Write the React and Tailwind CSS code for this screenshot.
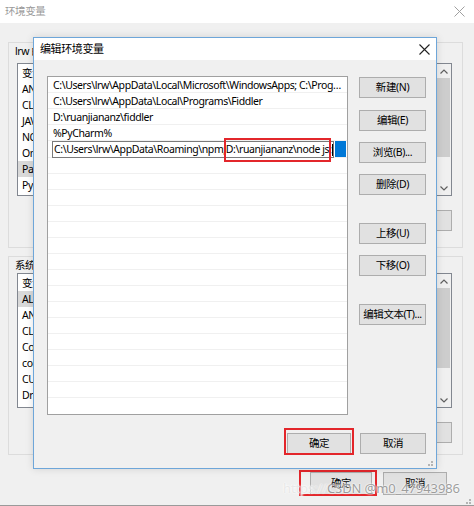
import React from 'react'

const userVars = ['变量', 'ANDROID_HOME', 'CLASSPATH', 'JAVA_HOME', 'NODE_PATH', 'OneDrive', 'Path', 'PyCharm']
const sysVars = ['变量', 'ALLUSERSPROFILE', 'ANDROID_SDK', 'CLASSPATH', 'ComSpec', 'configsetroot', 'CUDA_PATH', 'DriverData']

const paths = [
  'C:\\Users\\lrw\\AppData\\Local\\Microsoft\\WindowsApps; C:\\Program Files\\nodejs',
  'C:\\Users\\lrw\\AppData\\Local\\Programs\\Fiddler',
  'D:\\ruanjiananz\\fiddler',
  '%PyCharm%',
]

const WinButton = ({ children, className = '' }) => (
  <div className={'flex items-center justify-center h-[21px] bg-[#e1e1e1] border border-[#adadad] leading-none whitespace-nowrap ' + className}>
    {children}
  </div>
)

// red marker drawn over a button, like the hand-made highlight in the screenshot
const RedMark = ({ className }) => (
  <div className={'absolute border-2 border-[#e3262b] pointer-events-none ' + className} />
)

const ScrollBar = () => (
  <div className="w-[15px] h-full bg-[#f0f0f0] flex flex-col items-center">
    <div className="h-[14px] flex items-center justify-center">
      <svg width="8" height="5" viewBox="0 0 8 5"><path d="M0.5 4.5 L4 1 L7.5 4.5" fill="none" stroke="#606060" strokeWidth="1.2" /></svg>
    </div>
    <div className="w-[13px] h-[60%] bg-[#cdcdcd]" />
    <div className="flex-1" />
    <div className="h-[14px] flex items-center justify-center">
      <svg width="8" height="5" viewBox="0 0 8 5"><path d="M0.5 0.5 L4 4 L7.5 0.5" fill="none" stroke="#606060" strokeWidth="1.2" /></svg>
    </div>
  </div>
)

const VarList = ({ items, selected, height }) => (
  <div className={'flex w-[435px] bg-white border border-[#828790] ' + height}>
    <div className="flex-1 pt-[1px]">
      {items.map((t, i) => (
        <div key={i} className={'h-[16px] leading-[16px] pl-[4px] ' + (i === selected ? 'bg-[#d9d9d9]' : '')}>{t}</div>
      ))}
    </div>
    <ScrollBar />
  </div>
)

const Grip = () => (
  <svg width="10" height="10" viewBox="0 0 10 10">
    <rect x="7" y="7" width="2" height="2" fill="#b4b4b4" />
    <rect x="4" y="7" width="2" height="2" fill="#b4b4b4" />
    <rect x="7" y="4" width="2" height="2" fill="#b4b4b4" />
  </svg>
)

const BackWindow = () => (
  <div className="flex flex-col h-full">
    <div className="h-[23px] bg-white flex items-center justify-between pl-[5px] pr-[9px] text-[#9a9a9a] shrink-0">
      <span>环境变量</span>
      <svg width="11" height="11" viewBox="0 0 11 11"><path d="M0.5 0.5 L10.5 10.5 M10.5 0.5 L0.5 10.5" stroke="#a0a0a0" strokeWidth="1" /></svg>
    </div>
    <div className="pl-[8px] pt-[19px] flex flex-col">
      <div className="w-[455px] h-[206px] border border-[#dcdcdc] pl-[8px] flex flex-col">
        <div className="h-[20px] leading-[14px] pt-[1px] -ml-[2px]">lrw 的用户变量(U)</div>
        <VarList items={userVars} selected={6} height="h-[133px]" />
        <div className="flex justify-end mt-[14px] w-[435px]">
          <WinButton className="w-[76px]">新建(N)</WinButton>
        </div>
      </div>
      <div className="w-[455px] h-[199px] mt-[8px] border border-[#dcdcdc] pl-[8px] flex flex-col">
        <div className="h-[16px] pt-[1px] -ml-[2px] leading-[14px]">系统变量(S)</div>
        <VarList items={sysVars} selected={1} height="h-[135px]" />
        <div className="flex justify-end mt-[14px] w-[435px]">
          <WinButton className="w-[76px]">新建(W)</WinButton>
        </div>
      </div>
      <div className="flex justify-end gap-[11px] mt-[17px] pr-[27px]">
        <div className="relative">
          <WinButton className="w-[62px] h-[23px]">确定</WinButton>
          <RedMark className="-left-[11px] -right-[5px] -top-[2px] -bottom-[1px]" />
        </div>
        <WinButton className="w-[64px] h-[23px]">取消</WinButton>
      </div>
    </div>
    <div className="flex-1 flex items-end justify-end pr-[2px]"><Grip /></div>
    <div className="h-[3px] bg-[#9a9a9a] shrink-0" />
  </div>
)

const EditDialog = () => (
  <div className="absolute left-[33px] top-[37px] w-[404px] h-[432px] bg-[#f0f0f0] border border-[#6ea6d9] shadow-[0_0_8px_rgba(0,0,0,0.12)] flex flex-col">
    <div className="h-[22px] bg-white flex items-center justify-between pl-[6px] pr-[6px] shrink-0">
      <span className="text-[11px]">编辑环境变量</span>
      <svg width="11" height="11" viewBox="0 0 11 11"><path d="M0.5 0.5 L10.5 10.5 M10.5 0.5 L0.5 10.5" stroke="#222" strokeWidth="1.1" /></svg>
    </div>
    <div className="flex pl-[13px] pt-[16px] gap-[11px]">
      <div className="w-[301px] h-[339px] bg-white border border-[#a0a0a0] flex flex-col overflow-hidden">
        {paths.map((p, i) => (
          <div key={i} className="h-[16px] leading-[16px] pl-[5px] pr-[3px] border-b border-[#f0f0f0] truncate shrink-0">{p}</div>
        ))}
        <div className="relative h-[16px] flex items-center shrink-0">
          <div className="ml-[4px] w-[282px] h-[17px] border border-[#7a7a7a] bg-white leading-[15px] pl-[1px] whitespace-nowrap overflow-hidden">
            C:\Users\lrw\AppData\Roaming\npm;D:\ruanjiananz\node js;<span className="inline-block w-px h-[12px] bg-black align-middle" />
          </div>
          <div className="ml-[1px] w-[11px] h-[16px] bg-[#0078d7]" />
          <RedMark className="left-[176px] top-[-3px] w-[107px] h-[24px]" />
        </div>
        {Array.from({ length: 16 }).map((_, i) => (
          <div key={i} className="h-[16px] border-t border-[#f0f0f0] shrink-0" />
        ))}
      </div>
      <div className="flex flex-col w-[67px] pt-[1px]">
        <WinButton>新建(N)</WinButton>
        <WinButton className="mt-[12px]">编辑(E)</WinButton>
        <WinButton className="mt-[11px]">浏览(B)...</WinButton>
        <WinButton className="mt-[11px]">删除(D)</WinButton>
        <WinButton className="mt-[28px]">上移(U)</WinButton>
        <WinButton className="mt-[11px]">下移(O)</WinButton>
        <WinButton className="mt-[28px]">编辑文本(T)...</WinButton>
      </div>
    </div>
    <div className="flex justify-end gap-[9px] pr-[10px] mt-[18px]">
      <div className="relative">
        <WinButton className="w-[64px] border-[#0078d7]">确定</WinButton>
        <RedMark className="-left-[3px] -right-[3px] -top-[5px] -bottom-[1px]" />
      </div>
      <WinButton className="w-[66px]">取消</WinButton>
    </div>
    <div className="flex-1 flex items-end justify-end pr-[2px] pb-[1px]"><Grip /></div>
  </div>
)

export default function App() {
  return (
    <div className="relative w-[474px] h-[506px] overflow-hidden bg-[#f0f0f0] font-['Noto_Sans','Noto_Sans_CJK_SC',sans-serif] text-[10.5px] tracking-[-0.4px] text-black">
      <BackWindow />
      <EditDialog />
      <div className="absolute left-[283px] top-[479px] whitespace-nowrap text-[13px] leading-[18px] tracking-[-0.1px] text-[#8c8c8c]/85 [text-shadow:0_0_2px_#fff,0_0_2px_#fff]">
        <span className="text-[#d4d4d4]/50">https://</span>CSDN @m0_47943986
      </div>
    </div>
  )
}
